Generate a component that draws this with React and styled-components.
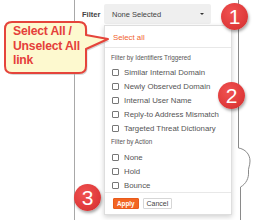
import styled, { createGlobalStyle } from "styled-components";

const GlobalStyle = createGlobalStyle`
  html, body {
    margin: 0;
    padding: 0;
    background: #fff;
  }
  body {
    font-family: "Liberation Sans", Arial, sans-serif;
    overflow: hidden;
  }
`;

const Page = styled.div`
  position: relative;
  width: 257px;
  height: 220px;
  display: flex;
  overflow: hidden;
  background: #fff;
`;

const LeftPane = styled.div`
  flex: none;
  width: 74px;
  border-right: 1px solid #a8a8a8;
`;

const Main = styled.div`
  flex: 1;
  display: grid;
  grid-template-columns: 22px auto;
  grid-template-rows: 21px auto;
  align-content: start;
  padding: 4px 0 0 7px;
`;

const FilterLabel = styled.div`
  align-self: center;
  font-size: 7.5px;
  font-weight: bold;
  color: #444;
`;

const SelectBox = styled.div`
  width: 107px;
  height: 20px;
  box-sizing: border-box;
  display: flex;
  align-items: center;
  justify-content: space-between;
  padding: 0 7px 0 8px;
  background: #efefef;
  border-radius: 2px;
  font-size: 7.5px;
  color: #444;
`;

const Caret = styled.span`
  width: 0;
  height: 0;
  border-left: 2px solid transparent;
  border-right: 2px solid transparent;
  border-top: 2.5px solid #333;
`;

const Panel = styled.div`
  grid-column: 2;
  width: 128px;
  box-sizing: border-box;
  background: #fff;
  border: 1px solid #dedede;
  box-shadow: 0 2px 5px rgba(0, 0, 0, 0.18);
  color: #555;
`;

const SelectAll = styled.div`
  height: 22px;
  box-sizing: border-box;
  padding: 6px 0 0 8px;
  line-height: 12px;
  font-size: 7.8px;
  color: #f0622e;
  border-bottom: 1px solid #e8e8e8;
`;

const Section = styled.div`
  padding: 0 6px;
`;

const SectionTitle = styled.div`
  font-size: 6.3px;
  line-height: 10px;
  color: #555;
  padding: ${(p) => (p.$first ? "5px 0 2px" : "2px 0 3px")};
`;

const OptionRow = styled.label`
  display: flex;
  align-items: center;
  height: 14px;
  gap: 5px;
  font-size: 7.8px;
  color: #555;
`;

const Check = styled.span`
  flex: none;
  width: 5px;
  height: 5px;
  margin-left: 1px;
  border: 1px solid #777;
  border-radius: 1px;
  background: #fff;
`;

const Footer = styled.div`
  display: flex;
  gap: 4px;
  padding: 5px 8px 5px;
  border-top: 1px solid #e8e8e8;
`;

const Button = styled.button`
  height: 11px;
  padding: 0 3px;
  font-family: inherit;
  font-size: ${(p) => (p.$primary ? "6.3px" : "7px")};
  font-weight: ${(p) => (p.$primary ? "bold" : "normal")};
  line-height: 9px;
  border-radius: 1px;
  border: 1px solid ${(p) => (p.$primary ? "#e85a1b" : "#d6d6d6")};
  background: ${(p) => (p.$primary ? "#f26522" : "#fff")};
  color: ${(p) => (p.$primary ? "#fff" : "#444")};
`;

const Badge = styled.div`
  position: absolute;
  left: ${(p) => p.$x}px;
  top: ${(p) => p.$y}px;
  width: 27px;
  height: 27px;
  border-radius: 50%;
  background: radial-gradient(circle at 40% 35%, #f05252 0%, #e03b3b 60%, #c92e2e 100%);
  box-shadow: 1px 2px 3px rgba(0, 0, 0, 0.35);
  display: flex;
  align-items: center;
  justify-content: center;
  color: #fff;
  font-size: 21px;
  line-height: 1;
  z-index: 3;
`;

const Callout = styled.div`
  position: absolute;
  left: 0;
  top: 0;
  width: 112px;
  height: 80px;
  z-index: 4;
`;

const CalloutShape = styled.svg`
  position: absolute;
  inset: 0;
  overflow: visible;
`;

const CalloutText = styled.div`
  position: absolute;
  left: 13px;
  top: 24px;
  font-size: 12.2px;
  font-weight: bold;
  line-height: 14.5px;
  letter-spacing: -0.2px;
  color: #e5403a;
`;

const EdgeLine = styled.svg`
  position: absolute;
  left: 0;
  top: 0;
  z-index: 2;
`;

const identifiers = [
  "Similar Internal Domain",
  "Newly Observed Domain",
  "Internal User Name",
  "Reply-to Address Mismatch",
  "Targeted Threat Dictionary",
];

const actions = ["None", "Hold", "Bounce"];

export default function App() {
  return (
    <>
      <GlobalStyle />
      <Page>
        <LeftPane />
        <Main>
          <FilterLabel>Filter</FilterLabel>
          <SelectBox>
            None Selected
            <Caret />
          </SelectBox>
          <Panel>
            <SelectAll>Select all</SelectAll>
            <Section>
              <SectionTitle $first>Filter by Identifiers Triggered</SectionTitle>
              {identifiers.map((name) => (
                <OptionRow key={name}>
                  <Check />
                  {name}
                </OptionRow>
              ))}
              <SectionTitle>Filter by Action</SectionTitle>
              {actions.map((name) => (
                <OptionRow key={name}>
                  <Check />
                  {name}
                </OptionRow>
              ))}
            </Section>
            <Footer>
              <Button $primary>Apply</Button>
              <Button>Cancel</Button>
            </Footer>
          </Panel>
        </Main>

        <EdgeLine width="257" height="220" viewBox="0 0 257 220">
          <path
            d="M238.5 0 V148 C245 149 250 154 250 161 C250 166 248 168 248.5 172 C249 178 246 184 240.5 187 V220"
            fill="none"
            stroke="#8a8a8a"
            strokeWidth="1"
          />
        </EdgeLine>

        <Callout>
          <CalloutShape width="112" height="80" viewBox="0 0 112 80">
            <path
              d="M12 22 H79 Q86 22 86 29 V35 L108 39 L86 49 V66 Q86 73 79 73 H12 Q5 73 5 66 V29 Q5 22 12 22 Z"
              fill="#b0b0b0"
              opacity="0.5"
              transform="translate(1.5 2)"
            />
            <path
              d="M12 22 H79 Q86 22 86 29 V35 L108 39 L86 49 V66 Q86 73 79 73 H12 Q5 73 5 66 V29 Q5 22 12 22 Z"
              fill="#fdf9cf"
              stroke="#e5443b"
              strokeWidth="2"
              strokeLinejoin="round"
            />
          </CalloutShape>
          <CalloutText>
            Select All /<br />
            Unselect All<br />
            link
          </CalloutText>
        </Callout>

        <Badge $x={221} $y={3}>1</Badge>
        <Badge $x={218} $y={82}>2</Badge>
        <Badge $x={74} $y={184}>3</Badge>
      </Page>
    </>
  );
}
